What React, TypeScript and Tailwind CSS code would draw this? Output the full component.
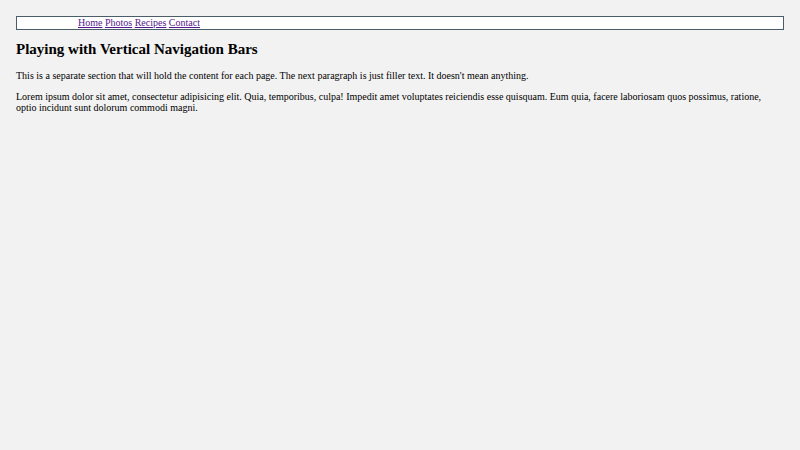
import React from "react";

const links = ["Home", "Photos", "Recipes", "Contact"];

export default function App() {
  return (
    <div className="min-h-[450px] bg-[#f2f2f2] p-4 text-[10px] leading-[normal] text-black" style={{ fontFamily: '"Liberation Serif", serif' }}>
      <nav className="border border-[#4b5d67] bg-white">
        <ul className="flex gap-[2.5px] pl-[61px] leading-[12px]">
          {links.map((l) => (
            <li key={l}>
              <a href="#" className="text-[#551a8b] underline">
                {l}
              </a>
            </li>
          ))}
        </ul>
      </nav>
      <h3 className="mt-[11px] text-[15px] font-bold leading-[normal]">Playing with Vertical Navigation Bars</h3>
      <p className="mt-[12px]">
        This is a separate section that will hold the content for each page. The next paragraph is just filler text. It doesn't mean anything.
      </p>
      <p className="mt-[10px]">
        Lorem ipsum dolor sit amet, consectetur adipisicing elit. Quia, temporibus, culpa! Impedit amet voluptates reiciendis esse quisquam. Eum quia, facere laboriosam quos possimus, ratione, optio incidunt sunt dolorum commodi magni.
      </p>
    </div>
  );
}
